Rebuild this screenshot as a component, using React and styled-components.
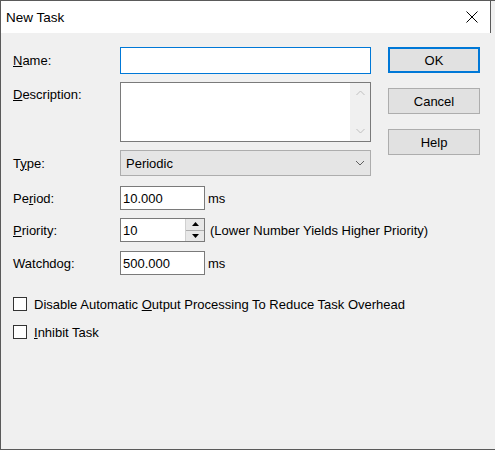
import React from "react";
import styled, { createGlobalStyle } from "styled-components";

const GlobalStyle = createGlobalStyle`
  html, body {
    margin: 0;
    padding: 0;
    background: #f0f0f0;
  }
  body {
    font-family: "Liberation Sans", Arial, sans-serif;
    font-size: 13px;
    color: #000;
  }
`;

const Window = styled.div`
  width: 495px;
  height: 450px;
  box-sizing: border-box;
  border-top: 1px solid #5a5a5a;
  border-left: 1px solid #5a5a5a;
  border-bottom: 1px solid #5a5a5a;
  background: #f0f0f0;
  display: flex;
  flex-direction: column;
  overflow: hidden;
`;

const TitleBar = styled.div`
  height: 32px;
  flex: 0 0 32px;
  width: 490px;
  box-sizing: border-box;
  background: #fff;
  border-right: 1px solid #5a5a5a;
  display: flex;
  align-items: center;
  justify-content: space-between;
  padding-left: 5px;
  font-size: 13.5px;
`;

const CloseButton = styled.div`
  width: 36px;
  height: 32px;
  display: flex;
  align-items: center;
  justify-content: center;
`;

const Body = styled.div`
  display: flex;
  padding: 14px 0 0 12px;
`;

const Form = styled.div`
  width: 359px;
  flex: 0 0 359px;
  display: flex;
  flex-direction: column;
`;

const Row = styled.div`
  display: flex;
  align-items: ${(p) => (p.$top ? "flex-start" : "center")};
  height: ${(p) => p.$h}px;
  margin-top: ${(p) => p.$mt || 0}px;
`;

const Label = styled.div`
  width: 107px;
  flex: 0 0 107px;
  padding-top: ${(p) => (p.$top ? 5 : 0)}px;
  white-space: nowrap;
`;

const Field = styled.div`
  box-sizing: border-box;
  width: ${(p) => p.$w}px;
  flex: 0 0 ${(p) => p.$w}px;
  height: 100%;
  background: #fff;
  border: 1px solid ${(p) => (p.$focus ? "#0078d7" : "#7a7a7a")};
  display: flex;
  align-items: center;
  padding-left: 2px;
`;

const TextArea = styled.div`
  box-sizing: border-box;
  width: 251px;
  flex: 0 0 251px;
  height: 100%;
  background: #fff;
  border: 1px solid #7a7a7a;
  display: flex;
  justify-content: flex-end;
`;

const ScrollBar = styled.div`
  width: 20px;
  height: 100%;
  background: #f0f0f0;
  display: flex;
  flex-direction: column;
  justify-content: space-between;
  align-items: center;
  padding: 7px 0;
  box-sizing: border-box;
`;

const Combo = styled.div`
  box-sizing: border-box;
  width: 251px;
  flex: 0 0 251px;
  height: 100%;
  background: #e5e5e5;
  border: 1px solid #adadad;
  display: flex;
  align-items: center;
  justify-content: space-between;
  padding: 0 5px 0 5px;
`;

const SpinBox = styled.div`
  box-sizing: border-box;
  width: 85px;
  flex: 0 0 85px;
  height: 100%;
  background: #fff;
  border: 1px solid #7a7a7a;
  display: flex;
  align-items: center;
  justify-content: space-between;
  padding-left: 2px;
`;

const SpinButtons = styled.div`
  width: 19px;
  height: 100%;
  display: flex;
  flex-direction: column;
  border-left: 1px solid #d0d0d0;
  box-sizing: border-box;
`;

const SpinHalf = styled.div`
  flex: 1;
  background: #e8e8e8;
  display: flex;
  align-items: center;
  justify-content: center;
  border-top: ${(p) => (p.$down ? "1px solid #adadad" : "none")};
`;

const Suffix = styled.div`
  margin-left: ${(p) => p.$ml || 3}px;
  white-space: nowrap;
`;

const CheckRow = styled.div`
  display: flex;
  align-items: center;
  height: 14px;
  margin-top: ${(p) => p.$mt}px;
  white-space: nowrap;
`;

const CheckBox = styled.div`
  width: 14px;
  height: 14px;
  flex: 0 0 14px;
  box-sizing: border-box;
  border: 1px solid #333;
  background: #fff;
  margin-right: 7px;
`;

const ButtonColumn = styled.div`
  margin-left: 16px;
  width: 92px;
  flex: 0 0 92px;
  display: flex;
  flex-direction: column;
  gap: 15px;
`;

const Button = styled.div`
  box-sizing: border-box;
  height: 26px;
  background: #e1e1e1;
  border: ${(p) => (p.$default ? "2px solid #0078d7" : "1px solid #adadad")};
  display: flex;
  align-items: center;
  justify-content: center;
`;

const Chevron = ({ up, color, w = 9 }) => (
  <svg width={w} height="6" viewBox="0 0 9 6">
    <path
      d={up ? "M0.5 5 L4.5 1 L8.5 5" : "M0.5 1 L4.5 5 L8.5 1"}
      fill="none"
      stroke={color}
      strokeWidth="1"
    />
  </svg>
);

const Triangle = ({ up }) => (
  <svg width="7" height="4" viewBox="0 0 7 4">
    <path d={up ? "M0 4 L3.5 0 L7 4 Z" : "M0 0 L3.5 4 L7 0 Z"} fill="#000" />
  </svg>
);

const App = () => {
  return (
    <>
      <GlobalStyle />
      <Window>
        <TitleBar>
          <span>New Task</span>
          <CloseButton>
            <svg width="12" height="12" viewBox="0 0 12 12">
              <path d="M0.5 0.5 L11.5 11.5 M11.5 0.5 L0.5 11.5" stroke="#000" strokeWidth="1" />
            </svg>
          </CloseButton>
        </TitleBar>
        <Body>
          <Form>
            <Row $h={27}>
              <Label>
                <u>N</u>ame:
              </Label>
              <Field $w={251} $focus />
            </Row>
            <Row $h={60} $mt={8} $top>
              <Label $top>
                <u>D</u>escription:
              </Label>
              <TextArea>
                <ScrollBar>
                  <Chevron up color="#bfbfbf" />
                  <Chevron color="#bfbfbf" />
                </ScrollBar>
              </TextArea>
            </Row>
            <Row $h={26} $mt={8}>
              <Label>
                T<u>y</u>pe:
              </Label>
              <Combo>
                <span>Periodic</span>
                <Chevron color="#606060" w={10} />
              </Combo>
            </Row>
            <Row $h={24} $mt={10}>
              <Label>
                Pe<u>r</u>iod:
              </Label>
              <Field $w={85}>10.000</Field>
              <Suffix>ms</Suffix>
            </Row>
            <Row $h={24} $mt={8}>
              <Label>
                <u>P</u>riority:
              </Label>
              <SpinBox>
                <span>10</span>
                <SpinButtons>
                  <SpinHalf>
                    <Triangle up />
                  </SpinHalf>
                  <SpinHalf $down>
                    <Triangle />
                  </SpinHalf>
                </SpinButtons>
              </SpinBox>
              <Suffix $ml={5}>(Lower Number Yields Higher Priority)</Suffix>
            </Row>
            <Row $h={24} $mt={9}>
              <Label>Watchdog:</Label>
              <Field $w={85}>500.000</Field>
              <Suffix>ms</Suffix>
            </Row>
            <CheckRow $mt={22}>
              <CheckBox />
              <span>
                Disable Automatic <u>O</u>utput Processing To Reduce Task Overhead
              </span>
            </CheckRow>
            <CheckRow $mt={14}>
              <CheckBox />
              <span>
                <u>I</u>nhibit Task
              </span>
            </CheckRow>
          </Form>
          <ButtonColumn>
            <Button $default>OK</Button>
            <Button>Cancel</Button>
            <Button>Help</Button>
          </ButtonColumn>
        </Body>
      </Window>
    </>
  );
};

export default App;
